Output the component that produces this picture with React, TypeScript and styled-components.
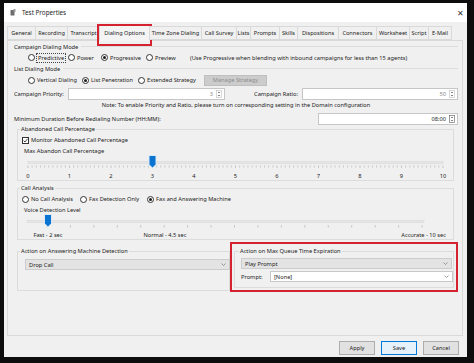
import React from "react";
import styled, { createGlobalStyle } from "styled-components";

const GlobalStyle = createGlobalStyle`
  html, body { margin: 0; padding: 0; background: #0d0d0d; }
  body {
    font-family: "Noto Sans", "Open Sans", "Liberation Sans", sans-serif;
    font-size: 5.7px;
    color: #1c1c1c;
  }
  * { box-sizing: border-box; }
`;

const Screen = styled.div`
  width: 474px;
  height: 363px;
  padding: 3px 7px 6px 4px;
  background: #0d0d0d;
`;

const Window = styled.div`
  height: 354px;
  background: #f0f0f0;
  display: flex;
  flex-direction: column;
`;

const TitleBar = styled.div`
  height: 19px;
  background: #fff;
  display: flex;
  align-items: center;
  gap: 6px;
  padding-left: 6px;
`;

const TitleText = styled.span`
  flex: 1;
  font-size: 6.3px;
`;

const CloseX = styled.span`
  width: 14px;
  text-align: center;
  font-size: 8px;
  color: #333;
`;

const Body = styled.div`
  flex: 1;
  display: flex;
  flex-direction: column;
  padding: 2px 4px 0 3px;
`;

const TabStrip = styled.div`
  height: 16px;
  display: flex;
  align-items: flex-end;
  padding-left: 1px;
  position: relative;
  z-index: 1;
`;

const Tab = styled.div<{ w: number; active?: boolean }>`
  position: relative;
  width: ${(p) => p.w}px;
  height: ${(p) => (p.active ? 16 : 14)}px;
  margin-bottom: ${(p) => (p.active ? -1 : 0)}px;
  margin-left: -1px;
  border: 1px solid #d9d9d9;
  border-bottom-color: ${(p) => (p.active ? "#f4f4f4" : "#d9d9d9")};
  background: ${(p) => (p.active ? "#f4f4f4" : "#f0f0f0")};
  display: flex;
  align-items: center;
  justify-content: center;
  white-space: nowrap;
  font-size: 5.6px;

  ${(p) =>
    p.active &&
    `&::after {
      content: "";
      position: absolute;
      left: -3px;
      right: -3px;
      top: -2px;
      bottom: -6px;
      border: 2px solid #d42230;
    }`}
`;

const Panel = styled.div`
  height: 296px;
  border: 1px solid #d9d9d9;
  padding: 0 4px 0 6px;
  display: flex;
  flex-direction: column;
`;

const SectionHeader = styled.div`
  height: 11px;
  display: flex;
  align-items: center;
  gap: 3px;
  &::after {
    content: "";
    flex: 1;
    height: 1px;
    background: #dcdcdc;
  }
`;

const RadioRow = styled.div<{ indent: number; h?: number; mt?: number }>`
  height: ${(p) => p.h ?? 11}px;
  margin-top: ${(p) => p.mt ?? 0}px;
  display: flex;
  align-items: center;
  padding-left: ${(p) => p.indent}px;
  white-space: nowrap;
`;

const RadioOption = styled.div<{ w?: number }>`
  display: flex;
  align-items: center;
  gap: 2px;
  width: ${(p) => (p.w ? `${p.w}px` : "auto")};
  flex-shrink: 0;
`;

const RadioCircle = styled.span<{ on?: boolean }>`
  width: 7px;
  height: 7px;
  border-radius: 50%;
  border: 1px solid #333;
  background: #fff;
  display: flex;
  align-items: center;
  justify-content: center;
  &::after {
    content: "";
    width: 3px;
    height: 3px;
    border-radius: 50%;
    background: ${(p) => (p.on ? "#1a1a1a" : "transparent")};
  }
`;

const FocusText = styled.span`
  outline: 1px dotted #444;
  outline-offset: 0;
  padding: 0 1px;
`;

const DisabledButton = styled.div`
  width: 63px;
  height: 11px;
  background: #cccccc;
  border: 1px solid #bfbfbf;
  color: #8c8c8c;
  display: flex;
  align-items: center;
  justify-content: center;
`;

const FieldRow = styled.div<{ mt?: number }>`
  height: 12px;
  margin-top: ${(p) => p.mt ?? 0}px;
  display: flex;
  align-items: center;
`;

const FieldLabel = styled.span<{ w?: number; right?: boolean }>`
  width: ${(p) => (p.w ? `${p.w}px` : "auto")};
  text-align: ${(p) => (p.right ? "right" : "left")};
  padding-right: ${(p) => (p.right ? 4 : 0)}px;
  white-space: nowrap;
  flex-shrink: 0;
`;

const SpinBox = styled.div<{ w: number; dim?: boolean }>`
  width: ${(p) => p.w}px;
  height: 12px;
  margin-left: auto;
  background: #fff;
  border: 1px solid #c6c6c6;
  display: flex;
  align-items: center;
  justify-content: flex-end;
  gap: 3px;
  padding-right: 2px;
  color: ${(p) => (p.dim ? "#8a8a8a" : "#1c1c1c")};
`;

const NoteLine = styled.div`
  height: 9px;
  display: flex;
  align-items: center;
  justify-content: center;
`;

const Group = styled.fieldset<{ mt?: number }>`
  margin: ${(p) => p.mt ?? 0}px 4px 0 3px;
  padding: 0 0 0 2px;
  border: 1px solid #dcdcdc;
  min-width: 0;
`;

const GroupLegend = styled.legend`
  padding: 0 1px;
  line-height: 8px;
  font-size: 5.7px;
`;

const CheckRow = styled.div`
  height: 10px;
  margin-top: 2px;
  display: flex;
  align-items: center;
  gap: 2px;
  padding-left: 2px;
`;

const CheckBox = styled.span`
  width: 7px;
  height: 7px;
  border: 1px solid #333;
  background: #fff;
  display: flex;
  align-items: center;
  justify-content: center;
`;

const SubLabel = styled.div`
  height: 11px;
  display: flex;
  align-items: center;
  padding-left: 4px;
`;

const SliderArt = styled.svg`
  display: block;
  overflow: visible;
`;

const ScaleRow = styled.div<{ pt: number; left: number }>`
  display: flex;
  padding-top: ${(p) => p.pt}px;
  margin-left: ${(p) => p.left}px;
  line-height: 8px;
`;

const ScaleNum = styled.span`
  width: 41.5px;
  text-align: center;
  flex-shrink: 0;
`;

const VoiceLabel = styled.span<{ ml: number }>`
  width: 60px;
  text-align: center;
  margin-left: ${(p) => p.ml}px;
  flex-shrink: 0;
  white-space: nowrap;
`;

const AccurateLabel = styled.span`
  margin-left: auto;
  padding-right: 7px;
  white-space: nowrap;
`;

const BottomRow = styled.div`
  display: flex;
  align-items: flex-start;
  margin: 2px 0 0 3px;
`;

const SmallGroup = styled.fieldset<{ w: number; mt?: number; pb: number }>`
  width: ${(p) => p.w}px;
  margin: ${(p) => p.mt ?? 0}px 0 0 0;
  padding: 0 0 ${(p) => p.pb}px ${(p) => (p.mt ? 2 : 4)}px;
  border: 1px solid #dcdcdc;
  min-width: 0;
`;

const Highlight = styled.div`
  width: 228px;
  border: 2px solid #d42230;
  padding: 3px 2px 2px 2px;
`;

const Select = styled.div<{ white?: boolean; ml: number; w?: number; mt?: number }>`
  height: 11px;
  width: ${(p) => (p.w ? `${p.w}px` : "auto")};
  flex: ${(p) => (p.w ? "none" : 1)};
  margin: ${(p) => p.mt ?? 0}px 0 0 ${(p) => p.ml}px;
  background: ${(p) => (p.white ? "#fff" : "#e3e3e3")};
  border: 1px solid ${(p) => (p.white ? "#c8c8c8" : "#cccccc")};
  display: flex;
  align-items: center;
  justify-content: space-between;
  padding: 0 3px 0 3px;
`;

const PromptRow = styled.div`
  height: 11px;
  margin: 2px 0 0 2px;
  display: flex;
  align-items: center;
`;

const ButtonRow = styled.div`
  display: flex;
  justify-content: flex-end;
  gap: 6px;
  padding: 5px 4px 0 0;
`;

const DialogButton = styled.div<{ primary?: boolean }>`
  width: 36px;
  height: 14px;
  background: ${(p) => (p.primary ? "#e5f1fb" : "#e1e1e1")};
  border: 1px solid ${(p) => (p.primary ? "#0078d7" : "#adadad")};
  display: flex;
  align-items: center;
  justify-content: center;
`;

const Chevron = () => (
  <svg width="5" height="3" viewBox="0 0 5 3">
    <path d="M0.5 0.5 L2.5 2.5 L4.5 0.5" fill="none" stroke="#777" strokeWidth="0.7" />
  </svg>
);

const Spinner = ({ dark }: { dark?: boolean }) => (
  <svg width="6" height="8" viewBox="0 0 6 8">
    <rect x="0.5" y="0.5" width="5" height="7" fill="#fff" stroke={dark ? "#555" : "#bbb"} strokeWidth="0.6" />
    <path d="M1.8 3 L3 1.8 L4.2 3 Z" fill="#555" />
    <path d="M1.8 5 L3 6.2 L4.2 5 Z" fill="#555" />
  </svg>
);

const Thumb = ({ x, y }: { x: number; y: number }) => (
  <g transform={`translate(${x} ${y})`}>
    <path d="M-4 -1 H4 V9 L0 13 L-4 9 Z" fill="#dbe9f6" />
    <path d="M-3 0 H3 V8.5 L0 11.5 L-3 8.5 Z" fill="#0a74d0" />
  </g>
);

const tabs: [string, number][] = [
  ["General", 29],
  ["Recording", 33],
  ["Transcript", 33],
  ["Dialing Options", 51],
  ["Time Zone Dialing", 53],
  ["Call Survey", 36],
  ["Lists", 15],
  ["Prompts", 30],
  ["Skills", 19],
  ["Dispositions", 42],
  ["Connectors", 39],
  ["Worksheet", 34],
  ["Script", 20],
  ["E-Mail", 24],
];

function AbandonSlider() {
  const ticks = Array.from({ length: 101 }, (_, i) => 8 + i * 4.15);
  return (
    <div>
      <SliderArt width="433" height="14">
        <rect x="8" y="5.5" width="415" height="2" fill="#e7e7e7" stroke="#d2d2d2" strokeWidth="0.5" />
        {ticks.map((t, i) => (
          <line key={i} x1={t} x2={t} y1="9.5" y2={i % 10 === 0 ? 12 : 11.5} stroke="#a9a9a9" strokeWidth="0.6" />
        ))}
        <Thumb x={132.5} y={0} />
      </SliderArt>
      <ScaleRow pt={2} left={-12.75}>
        {Array.from({ length: 11 }, (_, i) => (
          <ScaleNum key={i}>{i}</ScaleNum>
        ))}
      </ScaleRow>
    </div>
  );
}

function VoiceSlider() {
  const ticks = Array.from({ length: 17 }, (_, i) => 27 + i * 23.44);
  return (
    <div>
      <SliderArt width="433" height="13">
        <rect x="7" y="5.5" width="397" height="2" fill="#e7e7e7" stroke="#d2d2d2" strokeWidth="0.5" />
        {ticks.map((t, i) => (
          <line key={i} x1={t} x2={t} y1="10" y2="12.5" stroke="#a9a9a9" strokeWidth="0.6" />
        ))}
        <Thumb x={28} y={0} />
      </SliderArt>
      <ScaleRow pt={3} left={0}>
        <VoiceLabel ml={-2}>Fast - 2 sec</VoiceLabel>
        <VoiceLabel ml={57}>Normal - 4.5 sec</VoiceLabel>
        <AccurateLabel>Accurate - 10 sec</AccurateLabel>
      </ScaleRow>
    </div>
  );
}

export default function App() {
  return (
    <Screen>
      <GlobalStyle />
      <Window>
        <TitleBar>
          <svg width="6" height="7" viewBox="0 0 6 7">
            <rect x="0.5" y="1" width="4" height="5.5" rx="0.6" fill="#6d6d6d" />
            <rect x="3.5" y="0" width="2" height="3" fill="#9a9a9a" />
          </svg>
          <TitleText>Test Properties</TitleText>
          <CloseX>✕</CloseX>
        </TitleBar>
        <Body>
          <TabStrip>
            {tabs.map(([name, w]) => (
              <Tab key={name} w={w} active={name === "Dialing Options"}>
                {name}
              </Tab>
            ))}
          </TabStrip>
          <Panel>
            <SectionHeader>Campaign Dialing Mode</SectionHeader>
            <RadioRow indent={14}>
              <RadioOption w={40}>
                <RadioCircle />
                <FocusText>Predictive</FocusText>
              </RadioOption>
              <RadioOption w={33}>
                <RadioCircle />
                Power
              </RadioOption>
              <RadioOption w={45}>
                <RadioCircle on />
                Progressive
              </RadioOption>
              <RadioOption w={44}>
                <RadioCircle />
                Preview
              </RadioOption>
              <span>(Use Progressive when blending with inbound campaigns for less than 15 agents)</span>
            </RadioRow>
            <SectionHeader>List Dialing Mode</SectionHeader>
            <RadioRow indent={14} h={12}>
              <RadioOption w={54}>
                <RadioCircle />
                Vertical Dialing
              </RadioOption>
              <RadioOption w={56}>
                <RadioCircle on />
                List Penetration
              </RadioOption>
              <RadioOption w={66}>
                <RadioCircle />
                Extended Strategy
              </RadioOption>
              <DisabledButton>Manage Strategy</DisabledButton>
            </RadioRow>
            <FieldRow mt={2}>
              <FieldLabel w={54}>Campaign Priority:</FieldLabel>
              <SpinBox w={157} dim>
                3
                <Spinner />
              </SpinBox>
              <FieldLabel w={77} right>
                Campaign Ratio:
              </FieldLabel>
              <SpinBox w={156} dim>
                50
                <Spinner />
              </SpinBox>
            </FieldRow>
            <NoteLine>Note: To enable Priority and Ratio, please turn on corresponding setting in the Domain configuration</NoteLine>
            <FieldRow mt={4}>
              <FieldLabel>Minimum Duration Before Redialing Number (HH:MM):</FieldLabel>
              <SpinBox w={140}>
                08:00
                <Spinner dark />
              </SpinBox>
            </FieldRow>

            <Group>
              <GroupLegend>Abandoned Call Percentage</GroupLegend>
              <CheckRow>
                <CheckBox>
                  <svg width="5" height="5" viewBox="0 0 5 5">
                    <path d="M0.6 2.6 L2 4 L4.5 0.8" fill="none" stroke="#222" strokeWidth="0.8" />
                  </svg>
                </CheckBox>
                Monitor Abandoned Call Percentage
              </CheckRow>
              <SubLabel>Max Abandon Call Percentage</SubLabel>
              <AbandonSlider />
            </Group>

            <Group mt={3}>
              <GroupLegend>Call Analysis</GroupLegend>
              <RadioRow indent={2} h={10} mt={2}>
                <RadioOption w={58}>
                  <RadioCircle />
                  No Call Analysis
                </RadioOption>
                <RadioOption w={67}>
                  <RadioCircle />
                  Fax Detection Only
                </RadioOption>
                <RadioOption>
                  <RadioCircle on />
                  Fax and Answering Machine
                </RadioOption>
              </RadioRow>
              <SubLabel>Voice Detection Level</SubLabel>
              <VoiceSlider />
            </Group>

            <BottomRow>
              <SmallGroup w={215} mt={5} pb={20}>
                <GroupLegend>Action on Answering Machine Detection</GroupLegend>
                <Select ml={5} w={205} mt={4}>
                  Drop Call
                  <Chevron />
                </Select>
              </SmallGroup>
              <Highlight>
                <SmallGroup w={220} pb={5}>
                  <GroupLegend>Action on Max Queue Time Expiration</GroupLegend>
                  <Select ml={2} w={211} mt={3}>
                    Play Prompt
                    <Chevron />
                  </Select>
                  <PromptRow>
                    <FieldLabel w={29}>Prompt:</FieldLabel>
                    <Select white ml={0}>
                      [None]
                      <Chevron />
                    </Select>
                  </PromptRow>
                </SmallGroup>
              </Highlight>
            </BottomRow>
          </Panel>
          <ButtonRow>
            <DialogButton>Apply</DialogButton>
            <DialogButton primary>Save</DialogButton>
            <DialogButton>Cancel</DialogButton>
          </ButtonRow>
        </Body>
      </Window>
    </Screen>
  );
}
